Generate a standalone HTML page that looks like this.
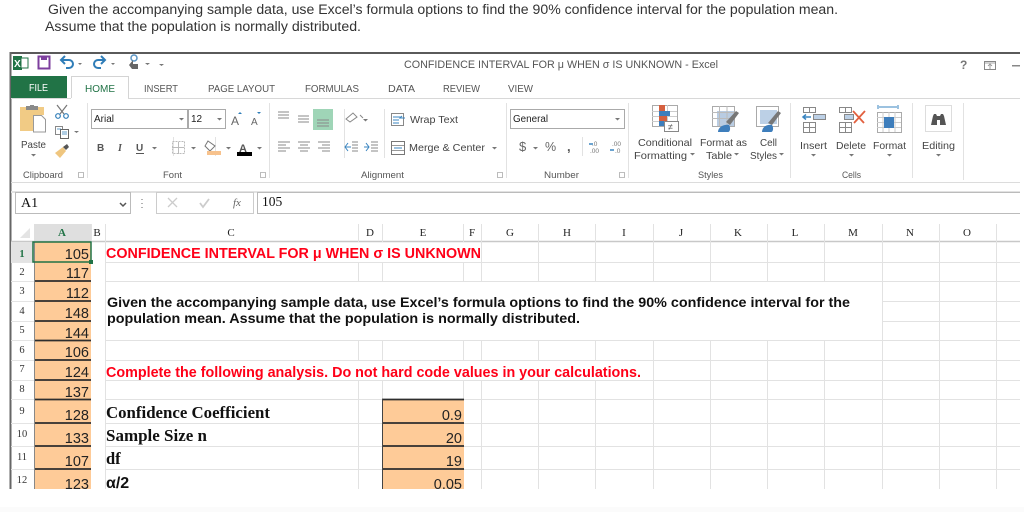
<!DOCTYPE html>
<html><head><meta charset="utf-8"><title>Excel</title>
<style>
html,body{margin:0;padding:0;background:#fff;width:1024px;height:512px;overflow:hidden}
svg{display:block;filter:blur(.35px)}
text{font-family:"Liberation Sans",sans-serif;white-space:pre}
.s{font-family:"Liberation Serif",serif}
.r{font-size:10.5px;fill:#444}
.t{font-size:10.5px;fill:#555}
.h{font-family:"Liberation Serif",serif;font-size:11px;fill:#222;text-anchor:middle}
.n{font-family:"Liberation Serif",serif;font-size:10.5px;fill:#333;text-anchor:middle}
.v{font-size:14.5px;fill:#222;text-anchor:end}
.b{font-family:"Liberation Serif",serif;font-weight:bold;font-size:16.500px;fill:#111}
.g{stroke:#e2e2e2;stroke-width:1;fill:none}
.d{fill:#777}
</style></head><body>
<svg width="1024" height="512" viewBox="0 0 1024 512" xmlns="http://www.w3.org/2000/svg">
<rect width="1024" height="512" fill="#fff"/>
<rect y="507" width="1024" height="5" fill="#fbfbfb"/>
<!-- question -->
<text x="48" y="14" font-size="13.500" fill="#333" textLength="790" lengthAdjust="spacingAndGlyphs">Given the accompanying sample data, use Excel’s formula options to find the 90% confidence interval for the population mean.</text>
<text x="45" y="31" font-size="13.500" fill="#333" textLength="316" lengthAdjust="spacingAndGlyphs">Assume that the population is normally distributed.</text>
<!-- frame -->
<rect x="10" y="52" width="1010" height="2" fill="#5a5a5a"/>
<rect x="9.500" y="52" width="2" height="437" fill="#666"/>
<!-- QAT -->
<rect x="13" y="56" width="9" height="14" fill="#217346"/><rect x="21" y="58" width="7" height="10" fill="#fff" stroke="#217346"/>
<text x="14" y="67" font-size="10" font-weight="bold" fill="#fff">X</text>
<rect x="38.500" y="56.500" width="11" height="12" fill="#fff" stroke="#7d3f9e" stroke-width="2"/><rect x="41" y="56" width="6" height="4" fill="#7d3f9e"/>
<path d="M62 60h7a3.500 3.500 0 0 1 0 8h-3M65 56l-4 4 4 4" fill="none" stroke="#2f7db8" stroke-width="2"/>
<path d="M78 63h4l-2 2z" class="d"/>
<path d="M104 60h-6a3.500 3.500 0 0 0 0 8h3M101 56l4 4-4 4" fill="none" stroke="#2f7db8" stroke-width="2"/>
<path d="M111 63h4l-2 2z" class="d"/>
<circle cx="134" cy="58" r="3" fill="none" stroke="#5b95c4" stroke-width="1.500"/><path d="M133 60v4h5v5h-6l-3-4z" fill="#666"/>
<path d="M145 63h5l-2.500 2zM159 62h5M159 64h5l-2.500 2z" class="d"/>
<text x="404" y="68" font-size="11" fill="#555" textLength="314" lengthAdjust="spacingAndGlyphs">CONFIDENCE INTERVAL FOR μ WHEN σ IS UNKNOWN - Excel</text>
<text x="960" y="69" font-size="12" font-weight="bold" fill="#777">?</text>
<rect x="984.500" y="61.500" width="11" height="8" fill="none" stroke="#888"/><path d="M984 63h12M990 69v-4M988 66l2-2 2 2" fill="none" stroke="#888" stroke-width=".8"/>
<rect x="1012" y="65" width="8" height="1.500" fill="#888"/>
<!-- tabs -->
<rect x="11" y="76" width="56" height="22" fill="#217346"/>
<text x="29" y="91" font-size="10" fill="#fff" textLength="19" lengthAdjust="spacingAndGlyphs">FILE</text>
<path d="M71.500 98V76.500H128.500V98" fill="#fff" stroke="#d4d4d4"/>
<text x="85" y="92" class="t" style="fill:#217346" textLength="30" lengthAdjust="spacingAndGlyphs">HOME</text>
<text x="144" y="92" class="t" textLength="34" lengthAdjust="spacingAndGlyphs">INSERT</text>
<text x="208" y="92" class="t" textLength="67" lengthAdjust="spacingAndGlyphs">PAGE LAYOUT</text>
<text x="305" y="92" class="t" textLength="54" lengthAdjust="spacingAndGlyphs">FORMULAS</text>
<text x="388" y="92" class="t" textLength="27" lengthAdjust="spacingAndGlyphs">DATA</text>
<text x="443" y="92" class="t" textLength="37" lengthAdjust="spacingAndGlyphs">REVIEW</text>
<text x="508" y="92" class="t" textLength="25" lengthAdjust="spacingAndGlyphs">VIEW</text>
<path d="M11 98.500H71M128 98.500H1020" stroke="#d8d8d8"/>
<path d="M11 182.500H1020" stroke="#dcdcdc"/>
<rect x="11" y="191" width="1009" height="2" fill="#e2e2e2"/>
<!-- group separators -->
<path d="M87.500 103V178M269.500 103V178M506.500 103V178M628.500 103V178M790.500 103V178M912.500 103V178M963.500 103V180M384.500 109V158M215.500 137V156M173.500 137V156M582.500 137V156M344.500 109V158" stroke="#e2e2e2"/>
<!-- clipboard -->
<path d="M20 107h24v8H33v16H20z" fill="#f1cb85"/><rect x="26" y="106" width="12" height="4" fill="#8a8a8a"/><rect x="30" y="105" width="4" height="3" fill="#8a8a8a"/>
<path d="M33.500 115.500h8l4 4v12.500h-12z" fill="#fff" stroke="#999"/>
<path d="M57 105l7 9M67 105l-7 9" stroke="#777" stroke-width="1.200"/><circle cx="58" cy="116" r="2.300" fill="none" stroke="#2f7db8" stroke-width="1.200"/><circle cx="66" cy="116" r="2.300" fill="none" stroke="#2f7db8" stroke-width="1.200"/>
<rect x="55.500" y="126.500" width="7" height="8" fill="#fff" stroke="#888"/><rect x="60.500" y="129.500" width="8" height="9" fill="#fff" stroke="#666"/><path d="M57 129h4M62 132h5M62 134h5" stroke="#2f7db8" stroke-width=".8"/>
<path d="M74 131h5l-2.500 2z" class="d"/>
<path d="M55 153l8-6 3 4-6 7z" fill="#efc67f"/><path d="M63 147l4-3 2 3-3 3z" fill="#555"/>
<text x="21" y="148" class="r" textLength="25" lengthAdjust="spacingAndGlyphs">Paste</text>
<path d="M31 154h5l-2.500 2.500z" class="d"/>
<text x="23" y="178" font-size="9.500" fill="#555" textLength="40" lengthAdjust="spacingAndGlyphs">Clipboard</text>
<path d="M78.500 172.500h5v5h-5z" fill="none" stroke="#aaa" stroke-width=".8"/>
<!-- font -->
<rect x="91.500" y="109.500" width="96" height="19" fill="#fff" stroke="#aaa"/><path d="M188.500 109.500h37v19h-37z" fill="#fff" stroke="#aaa"/>
<text x="94" y="122" font-size="10" fill="#222" textLength="20" lengthAdjust="spacingAndGlyphs">Arial</text>
<text x="191" y="122" font-size="10" fill="#222">12</text>
<path d="M179 118h5l-2.500 2.500zM217 118h5l-2.500 2.500z" class="d"/>
<text x="231" y="125" font-size="12" fill="#666">A</text><path d="M238 114l2-2 2 2z" fill="#2f7db8"/>
<text x="251" y="125" font-size="10" fill="#666">A</text><path d="M257 112l2 2 2-2z" fill="#2f7db8"/>
<text x="97" y="151" font-size="10" font-weight="bold" fill="#555">B</text>
<text x="118" y="151" font-size="10" font-style="italic" font-weight="bold" fill="#555" class="s">I</text>
<text x="136" y="151" font-size="10" font-weight="bold" fill="#555">U</text><path d="M136 153.500h8" stroke="#555"/>
<path d="M152 147h5l-2.500 2.500z" class="d"/>
<rect x="172.500" y="141.500" width="12" height="12" fill="none" stroke="#bbb" stroke-dasharray="2 1"/><path d="M178.500 142v12M172 147.500h12" stroke="#bbb"/>
<path d="M191 147h5l-2.500 2.500z" class="d"/>
<path d="M208 141l7 5-5 5-5-5z" fill="#fff" stroke="#777"/><rect x="207" y="151" width="14" height="4" fill="#f7c28d"/>
<path d="M226 147h5l-2.500 2.500z" class="d"/>
<text x="239" y="152" font-size="11" font-weight="bold" fill="#555">A</text><rect x="237" y="152" width="15" height="4" fill="#000"/>
<path d="M257 147h5l-2.500 2.500z" class="d"/>
<text x="163" y="178" font-size="9.500" fill="#555" textLength="19" lengthAdjust="spacingAndGlyphs">Font</text>
<path d="M260.500 172.500h5v5h-5z" fill="none" stroke="#aaa" stroke-width=".8"/>
<!-- alignment -->
<rect x="313" y="109" width="20" height="21" fill="#9fd5b7"/>
<path d="M278 112h11M278 115h11M278 118h11M298 116h11M298 119h11M298 122h11M317 120h12M317 123h12M317 126h12" stroke="#888"/>
<path d="M278 142h12M278 145h8M278 148h12M278 151h8M298 142h12M300 145h8M298 148h12M300 151h8M318 142h12M322 145h8M318 148h12M322 151h8" stroke="#888"/>
<path d="M346 119l7-6 4 4-7 5zM360 115l3 3" fill="none" stroke="#888"/><path d="M363 119h5l-2.500 2.500z" class="d"/>
<path d="M345 147h6M348 143l-3 4 3 4" stroke="#3a85c0" fill="none"/><path d="M352 142h6M352 145h6M352 148h6M352 151h6" stroke="#888"/>
<path d="M364 147h5M366 143l3 4-3 4" stroke="#3a85c0" fill="none"/><path d="M371 142h7M371 145h7M371 148h7M371 151h7" stroke="#888"/>
<rect x="391.500" y="113.500" width="12" height="12" fill="#fff" stroke="#888"/><path d="M393 117h8M393 120h6M393 123h6" stroke="#3a85c0"/><path d="M405 118h-5l2-2" stroke="#3a85c0" fill="none"/>
<text x="410" y="123" class="r" textLength="48" lengthAdjust="spacingAndGlyphs">Wrap Text</text>
<rect x="391.500" y="141.500" width="13" height="13" fill="#fff" stroke="#777"/><path d="M392 145.500h12M392 150.500h12" stroke="#999"/><path d="M394 148h8" stroke="#3a85c0"/>
<text x="409" y="151" class="r" textLength="76" lengthAdjust="spacingAndGlyphs">Merge &amp; Center</text>
<path d="M492 147h5l-2.500 2.500z" class="d"/>
<text x="361" y="178" font-size="9.500" fill="#555" textLength="43" lengthAdjust="spacingAndGlyphs">Alignment</text>
<path d="M497.500 172.500h5v5h-5z" fill="none" stroke="#aaa" stroke-width=".8"/>
<!-- number -->
<rect x="510.500" y="109.500" width="114" height="19" fill="#fff" stroke="#aaa"/>
<text x="513" y="122" font-size="10" fill="#222" textLength="35" lengthAdjust="spacingAndGlyphs">General</text>
<path d="M615 118h5l-2.500 2.500z" class="d"/>
<text x="519" y="151" font-size="13" fill="#666">$</text><path d="M533 147h5l-2.500 2.500z" class="d"/>
<text x="545" y="151" font-size="12.500" fill="#666">%</text>
<text x="567" y="151" font-size="13" font-weight="bold" fill="#555">,</text>
<text x="592" y="146" font-size="6.500" fill="#777">.0</text><text x="590" y="153" font-size="6.500" fill="#777">.00</text><path d="M589 144h4" stroke="#3a85c0" stroke-width="1.500"/>
<text x="612" y="146" font-size="6.500" fill="#777">.00</text><text x="615" y="153" font-size="6.500" fill="#777">.0</text><path d="M610 150h4" stroke="#3a85c0" stroke-width="1.500"/>
<text x="544" y="178" font-size="9.500" fill="#555" textLength="35" lengthAdjust="spacingAndGlyphs">Number</text>
<path d="M619.500 172.500h5v5h-5z" fill="none" stroke="#aaa" stroke-width=".8"/>
<!-- styles -->
<rect x="652.500" y="105.500" width="25" height="21" fill="#fff" stroke="#aaa"/>
<path d="M652 111.500h25M652 116.500h25M652 121.500h25M659.500 105v21M667.500 105v21" stroke="#ccc"/>
<rect x="659" y="105" width="6" height="6" fill="#d5603f"/><rect x="659" y="111" width="11" height="5" fill="#3e7ebc"/><rect x="659" y="116" width="8" height="5" fill="#d5603f"/><rect x="659" y="121" width="5" height="5" fill="#3e7ebc"/>
<rect x="664.500" y="121.500" width="14" height="10" fill="#fff" stroke="#888"/><text x="668" y="130" font-size="9" fill="#555">≠</text>
<rect x="712.500" y="106.500" width="22" height="20" fill="#fff" stroke="#aaa"/><rect x="717" y="111" width="17" height="15" fill="#b9cce2"/><path d="M712 112.500h22M712 118.500h22M719.500 106v20M727 106v20" stroke="#bbb"/>
<path d="M726 122l10-11 3 2-9 12z" fill="#777"/><path d="M718 132c0-5 6-8 11-7 2 3 1 7-1 7z" fill="#3e7ebc"/>
<rect x="756.500" y="106.500" width="22" height="20" fill="#fff" stroke="#aaa"/><rect x="760" y="110" width="17" height="14" fill="#bcd0e6"/>
<path d="M768 123l10-12 3 2-9 12z" fill="#777"/><path d="M762 132c0-5 5-8 10-7 2 3 1 7-1 7z" fill="#3e7ebc"/>
<text x="638" y="146" class="r" textLength="54" lengthAdjust="spacingAndGlyphs">Conditional</text>
<text x="634" y="159" class="r" textLength="53" lengthAdjust="spacingAndGlyphs">Formatting</text><path d="M690 153h5l-2.500 2.500z" class="d"/>
<text x="700" y="146" class="r" textLength="47" lengthAdjust="spacingAndGlyphs">Format as</text>
<text x="706" y="159" class="r" textLength="26" lengthAdjust="spacingAndGlyphs">Table</text><path d="M734 153h5l-2.500 2.500z" class="d"/>
<text x="760" y="146" class="r" textLength="17" lengthAdjust="spacingAndGlyphs">Cell</text>
<text x="750" y="159" class="r" textLength="27" lengthAdjust="spacingAndGlyphs">Styles</text><path d="M779 153h5l-2.500 2.500z" class="d"/>
<text x="698" y="178" font-size="9.500" fill="#555" textLength="25" lengthAdjust="spacingAndGlyphs">Styles</text>
<!-- cells -->
<path d="M803.500 107.500h12v5h-12zM809.500 107v5M803.500 122.500h12v10h-12zM809.500 122v10M803 127.500h12" fill="none" stroke="#888"/>
<rect x="813.500" y="114.500" width="12" height="5" fill="#bcd0e6" stroke="#888"/><path d="M803 117h8M806 114.500l-3 2.500 3 2.500" fill="none" stroke="#3a85c0" stroke-width="1.500"/>
<path d="M839.500 107.500h12v5h-12zM845.500 107v5M839.500 122.500h12v10h-12zM845.500 122v10M839 127.500h12" fill="none" stroke="#888"/>
<rect x="844.500" y="114.500" width="9" height="5" fill="#bcd0e6" stroke="#888"/><path d="M853 111l11 12M865 111l-11 12" stroke="#e2603f" stroke-width="1.800"/>
<path d="M878 105v4M898 105v4M879 107h18" stroke="#3a85c0"/>
<rect x="877.500" y="112.500" width="24" height="20" fill="#fff" stroke="#aaa"/><path d="M877 117.500h24M877 122.500h24M877 127.500h24M883 112v20M889 112v20M895 112v20" stroke="#ccc"/>
<rect x="884" y="117" width="10" height="11" fill="#3e7ebc"/>
<text x="800" y="149" class="r" textLength="27" lengthAdjust="spacingAndGlyphs">Insert</text>
<text x="836" y="149" class="r" textLength="30" lengthAdjust="spacingAndGlyphs">Delete</text>
<text x="873" y="149" class="r" textLength="33" lengthAdjust="spacingAndGlyphs">Format</text>
<path d="M811 154h5l-2.500 2.500zM849 154h5l-2.500 2.500zM887 154h5l-2.500 2.500z" class="d"/>
<text x="842" y="178" font-size="9.500" fill="#555" textLength="19" lengthAdjust="spacingAndGlyphs">Cells</text>
<!-- editing -->
<rect x="925.500" y="105.500" width="26" height="26" fill="#fff" stroke="#ddd"/>
<path d="M931 125l2-9 1-2h2l1 2 3 0 1-2h2l1 2 2 9h-6v-5h-3v5z" fill="#555"/>
<text x="922" y="149" class="r" textLength="33" lengthAdjust="spacingAndGlyphs">Editing</text>
<path d="M936 154h5l-2.500 2.500z" class="d"/>
<!-- formula bar -->
<rect x="15.500" y="192.500" width="115" height="21" fill="#fff" stroke="#bbb"/>
<text x="21" y="207" font-size="14" fill="#111" class="s">A1</text>
<path d="M120 203l3 3 3-3" fill="none" stroke="#555" stroke-width="1.500"/>
<path d="M142 199v1M142 203v1M142 207v1" stroke="#999" stroke-width="1.500"/>
<rect x="156.500" y="192.500" width="97" height="21" fill="#fff" stroke="#ccc"/>
<path d="M168 198l9 9M177 198l-9 9" stroke="#ccc" stroke-width="1.300"/><path d="M200 203l3 4 6-8" fill="none" stroke="#ccc" stroke-width="1.800"/>
<text x="233" y="206" font-size="11" font-style="italic" class="s" fill="#666">fx</text>
<rect x="257.500" y="192.500" width="770" height="21" fill="#fff" stroke="#bbb"/>
<text x="262" y="206" font-size="13.500" fill="#111" class="s">105</text>
<rect x="1020" y="52" width="4" height="170" fill="#fff"/>
<!-- sheet headers -->
<rect x="34" y="224" width="57" height="18" fill="#dfdfdf"/>
<path d="M30 228v10H20z" fill="#e4e4e4"/>
<path d="M11 241.500H1020" stroke="#c8c8c8" stroke-width="1.500"/>
<path d="M91.500 224v18M105.500 224v18M358.500 224v18M382.500 224v18M463.500 224v18M481.500 224v18M538.500 224v18M595.500 224v18M653.500 224v18M710.500 224v18M767.500 224v18M824.500 224v18M882.500 224v18M939.500 224v18M996.500 224v18" class="g"/>
<text x="62" y="236" class="h" style="fill:#217346;font-weight:bold">A</text>
<text x="97" y="236" class="h">B</text><text x="231" y="236" class="h">C</text><text x="370" y="236" class="h">D</text><text x="423" y="236" class="h">E</text><text x="472" y="236" class="h">F</text><text x="510" y="236" class="h">G</text><text x="567" y="236" class="h">H</text><text x="624" y="236" class="h">I</text><text x="681" y="236" class="h">J</text><text x="738" y="236" class="h">K</text><text x="795" y="236" class="h">L</text><text x="853" y="236" class="h">M</text><text x="910" y="236" class="h">N</text><text x="967" y="236" class="h">O</text>
<!-- row header -->
<rect x="11" y="242" width="23" height="20" fill="#e3e3e3"/>
<path d="M11 262.500H34M11 281.500H34M11 301.500H34M11 321.500H34M11 340.500H34M11 360.500H34M11 380.500H34M11 399.500H34M11 423.500H34M11 446.500H34M11 469.500H34" stroke="#e4e4e4"/>
<text x="22" y="257" class="n" style="fill:#217346;font-weight:bold">1</text><text x="22" y="275" class="n">2</text><text x="22" y="294" class="n">3</text><text x="22" y="314" class="n">4</text><text x="22" y="333" class="n">5</text><text x="22" y="353" class="n">6</text><text x="22" y="372" class="n">7</text><text x="22" y="392" class="n">8</text><text x="22" y="414" class="n">9</text><text x="22" y="437" class="n">10</text><text x="22" y="460" class="n">11</text><text x="22" y="483" class="n">12</text>
<!-- gridlines -->
<path d="M105 262.500H1020M105 281.500H1020M882 301.500H1020M882 321.500H1020M105 340.500H1020M105 360.500H1020M105 380.500H1020M105 399.500H1020M105 423.500H1020M105 446.500H1020M105 469.500H1020" class="g"/>
<path d="M105.500 242V489" class="g"/>
<path d="M358.500 262V281M382.500 262V281M463.500 262V281M481.500 242V281M538.500 242V281M595.500 242V281M653.500 242V281M710.500 242V281M767.500 242V281M824.500 242V281" class="g"/>
<path d="M358.500 340V360M382.500 340V360M463.500 340V360M481.500 340V360M538.500 340V360M595.500 340V360M653.500 340V489M710.500 340V489M767.500 340V489M824.500 340V489" class="g"/>
<path d="M882.500 242V489M939.500 242V489M996.500 242V489" class="g"/>
<path d="M358.500 380V489M382.500 380V489M463.500 380V489M481.500 380V489M538.500 380V489M595.500 380V489" class="g"/>
<!-- col A -->
<rect x="34" y="242" width="57" height="247" fill="#fecb98"/>
<path d="M34 281H91M34 301H91M34 321H91M34 340.500H91M34 360H91M34 380H91M34 399.500H91M34 423H91M34 446H91M34 469H91" stroke="#2e2e2e" stroke-width="1.800"/>
<path d="M34.500 242V489" stroke="#888"/>
<text x="89" y="259" class="v">105</text><text x="89" y="278" class="v">117</text><text x="89" y="298" class="v">112</text><text x="89" y="318" class="v">148</text><text x="89" y="338" class="v">144</text><text x="89" y="357" class="v">106</text><text x="89" y="377" class="v">124</text><text x="89" y="397" class="v">137</text><text x="89" y="420" class="v">128</text><text x="89" y="443" class="v">133</text><text x="89" y="466" class="v">107</text><text x="89" y="489" class="v">123</text>
<rect x="33" y="242" width="58" height="20" fill="none" stroke="#217346" stroke-width="1.500"/>
<rect x="89" y="260" width="4" height="4" fill="#217346"/>
<!-- col E -->
<rect x="382" y="399" width="82" height="90" fill="#fecb98"/>
<path d="M382 399.500H464M382 423H464M382 446H464M382 469H464" stroke="#2e2e2e" stroke-width="1.800"/>
<path d="M382.500 399V489" stroke="#444"/>
<text x="462" y="420" class="v">0.9</text><text x="462" y="443" class="v">20</text><text x="462" y="466" class="v">19</text><text x="462" y="489" class="v">0.05</text>
<!-- text -->
<text x="106" y="258" font-size="14.500" font-weight="bold" fill="#ff0018" textLength="375" lengthAdjust="spacingAndGlyphs">CONFIDENCE INTERVAL FOR μ WHEN σ IS UNKNOWN</text>
<text x="107" y="307" font-size="14" font-weight="bold" fill="#111" textLength="743" lengthAdjust="spacingAndGlyphs">Given the accompanying sample data, use Excel’s formula options to find the 90% confidence interval for the</text>
<text x="107" y="323" font-size="14" font-weight="bold" fill="#111" textLength="473" lengthAdjust="spacingAndGlyphs">population mean. Assume that the population is normally distributed.</text>
<text x="106" y="377" font-size="14.500" font-weight="bold" fill="#ff0018" textLength="535" lengthAdjust="spacingAndGlyphs">Complete the following analysis. Do not hard code values in your calculations.</text>
<text x="106" y="418" class="b" textLength="164" lengthAdjust="spacingAndGlyphs">Confidence Coefficient</text>
<text x="106" y="441" class="b" textLength="101" lengthAdjust="spacingAndGlyphs">Sample Size n</text>
<text x="106" y="464" class="b">df</text>
<text x="106" y="488" font-size="16" font-weight="bold" fill="#111">α/2</text>
<!-- bottom clip -->
<rect x="9" y="489" width="1015" height="18" fill="#fff"/>
</svg>
</body></html>
